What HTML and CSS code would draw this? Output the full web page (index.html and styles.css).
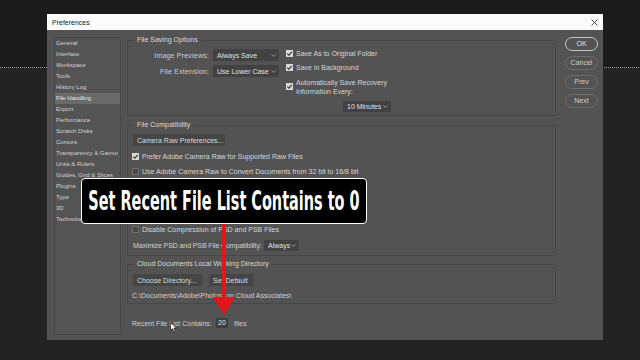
FILE: index.html
```html
<!DOCTYPE html>
<html>
<head>
<meta charset="utf-8">
<title>Preferences</title>
<link rel="stylesheet" href="styles.css">
</head>
<body>
<div class="desktop">
  <div class="dialog">
    <div class="titlebar">
      <span class="title">Preferences</span>
      <svg class="close" width="7" height="7" viewBox="0 0 7 7"><path d="M0.5 0.5 L6.5 6.5 M6.5 0.5 L0.5 6.5" stroke="#333" stroke-width="0.9" fill="none"/></svg>
    </div>
    <div class="dbody">
      <ul class="sidebar">
        <li>General</li>
        <li>Interface</li>
        <li>Workspace</li>
        <li>Tools</li>
        <li>History Log</li>
        <li class="sel-item">File Handling</li>
        <li>Export</li>
        <li>Performance</li>
        <li>Scratch Disks</li>
        <li>Cursors</li>
        <li>Transparency &amp; Gamut</li>
        <li>Units &amp; Rulers</li>
        <li>Guides, Grid &amp; Slices</li>
        <li>Plugins</li>
        <li>Type</li>
        <li>3D</li>
        <li>Technology Previews</li>
      </ul>

      <div class="main">
        <fieldset class="grp">
          <legend>File Saving Options</legend>
          <div class="g1">
            <div class="g1-left">
              <div class="frow"><span class="flabel">Image Previews:</span><span class="select w66">Always Save<svg class="chev" width="5" height="3" viewBox="0 0 5 3"><path d="M0.5 0.5 L2.5 2.5 L4.5 0.5" stroke="#aaa" stroke-width="0.8" fill="none"/></svg></span></div>
              <div class="frow"><span class="flabel">File Extension:</span><span class="select w66">Use Lower Case<svg class="chev" width="5" height="3" viewBox="0 0 5 3"><path d="M0.5 0.5 L2.5 2.5 L4.5 0.5" stroke="#aaa" stroke-width="0.8" fill="none"/></svg></span></div>
            </div>
            <div class="g1-right">
              <div class="crow"><span class="cb on"><svg width="7" height="7" viewBox="0 0 7 7"><path d="M1.3 3.6 L2.9 5.1 L5.8 1.8" stroke="#333" stroke-width="1.1" fill="none"/></svg></span>Save As to Original Folder</div>
              <div class="crow"><span class="cb on"><svg width="7" height="7" viewBox="0 0 7 7"><path d="M1.3 3.6 L2.9 5.1 L5.8 1.8" stroke="#333" stroke-width="1.1" fill="none"/></svg></span>Save in Background</div>
              <div class="crow two"><span class="cb on"><svg width="7" height="7" viewBox="0 0 7 7"><path d="M1.3 3.6 L2.9 5.1 L5.8 1.8" stroke="#333" stroke-width="1.1" fill="none"/></svg></span><span>Automatically Save Recovery<br>Information Every:</span></div>
              <span class="select w48 mins">10 Minutes<svg class="chev" width="5" height="3" viewBox="0 0 5 3"><path d="M0.5 0.5 L2.5 2.5 L4.5 0.5" stroke="#aaa" stroke-width="0.8" fill="none"/></svg></span>
            </div>
          </div>
        </fieldset>

        <fieldset class="grp g2box">
          <legend>File Compatibility</legend>
          <div class="g2">
            <span class="btn crp">Camera Raw Preferences...</span>
            <div class="rows">
              <div class="crow r"><span class="cb on"><svg width="7" height="7" viewBox="0 0 7 7"><path d="M1.3 3.6 L2.9 5.1 L5.8 1.8" stroke="#333" stroke-width="1.1" fill="none"/></svg></span>Prefer Adobe Camera Raw for Supported Raw Files</div>
              <div class="crow r"><span class="cb"></span>Use Adobe Camera Raw to Convert Documents from 32 bit to 16/8 bit</div>
              <div class="crow r"><span class="cb"></span></div>
              <div class="crow r"><span class="cb"></span></div>
              <div class="crow r"><span class="cb"></span></div>
              <div class="crow r"><span class="cb"></span>Disable Compression of PSD and PSB Files</div>
            </div>
            <div class="maxrow"><span class="mlabel">Maximize PSD and PSB File Compatibility:</span><span class="select w35">Always<svg class="chev" width="5" height="3" viewBox="0 0 5 3"><path d="M0.5 0.5 L2.5 2.5 L4.5 0.5" stroke="#aaa" stroke-width="0.8" fill="none"/></svg></span></div>
          </div>
        </fieldset>

        <fieldset class="grp g3box">
          <legend>Cloud Documents Local Working Directory</legend>
          <div class="g3">
            <div class="brow"><span class="btn cd">Choose Directory...</span><span class="btn sd">Set Default</span></div>
            <div class="path">C:\Documents\Adobe\Photoshop Cloud Associates\</div>
          </div>
        </fieldset>

        <div class="recent"><span class="rlabel">Recent File List Contains:</span><span class="num">20</span><span class="files">files</span></div>
      </div>

      <div class="btns">
        <span class="pbtn ok">OK</span>
        <span class="pbtn">Cancel</span>
        <span class="pbtn">Prev</span>
        <span class="pbtn">Next</span>
      </div>
    </div>
  </div>

  <div class="callout"><span class="ctext">Set Recent File List Contains to 0</span></div>
  <svg class="arrow" width="28" height="96" viewBox="0 0 28 96">
    <rect x="12" y="2" width="4" height="76" fill="#e3161b"/>
    <polygon points="3,75 25,75 14,93" fill="#e3161b"/>
  </svg>
  <svg class="cursor" width="8" height="11" viewBox="0 0 8 11">
    <path d="M0.5 0.5 L0.5 8.5 L2.5 6.6 L4 9.8 L5.4 9.2 L3.9 6.1 L6.5 6.1 Z" fill="#fff" stroke="#000" stroke-width="0.6"/>
  </svg>
</div>
</body>
</html>
```

FILE: styles.css
```css
* { box-sizing: border-box; }
html, body { margin: 0; padding: 0; }
body {
  width: 640px;
  height: 360px;
  overflow: hidden;
  font-family: "Liberation Sans", Arial, sans-serif;
  background: #232323;
}
.desktop {
  position: relative;
  width: 640px;
  height: 360px;
  padding: 14px 0 0 47px;
  background:
    repeating-linear-gradient(90deg, #9a9a9a 0 1px, transparent 1px 2px) 0 67px / 100% 1px no-repeat,
    linear-gradient(#1b1b1b, #1b1b1b) 0 0 / 100% 67px no-repeat,
    #232323;
}
.dialog {
  width: 556px;
  height: 326px;
  display: flex;
  flex-direction: column;
  background: #535353;
}
.titlebar {
  height: 16px;
  flex: none;
  background: #fbfbfb;
  display: flex;
  align-items: center;
  justify-content: space-between;
  padding: 0 5px 0 5px;
}
.title {
  font-size: 7px;
  color: #222;
}
.close { display: block; }
.dbody {
  flex: 1;
  display: flex;
  padding: 5px 5px 5px 7px;
}
.sidebar {
  list-style: none;
  margin: 2px 6px 0 0;
  padding: 0;
  width: 67px;
  flex: none;
  border: 1px solid #494949;
  background: #545454;
}
.sidebar li {
  height: 11px;
  line-height: 11px;
  font-size: 6px;
  color: #d2d2d2;
  padding-left: 1px;
  white-space: nowrap;
  overflow: hidden;
}
.sidebar li.sel-item { background: #6a6a6a; color: #e6e6e6; }

.main {
  width: 429px;
  flex: none;
  display: flex;
  flex-direction: column;
  font-size: 7px;
  color: #d6d6d6;
}
.grp {
  margin: 0;
  padding: 0;
  border: 1px solid #474747;
  min-inline-size: 0;
}
.grp legend {
  margin-left: 6px;
  padding: 0 3px;
  font-size: 7px;
  line-height: 10px;
  color: #d8d8d8;
}
.g1 {
  display: flex;
  padding: 1px 0 3px 0;
}
.g1-left {
  width: 158px;
  flex: none;
  padding-top: 1px;
}
.frow {
  height: 16px;
  display: flex;
  align-items: center;
}
.flabel {
  width: 81px;
  margin-right: 4px;
  text-align: right;
  letter-spacing: 0.2px;
  color: #cfcfcf;
}
.select {
  height: 12px;
  display: flex;
  align-items: center;
  justify-content: space-between;
  padding: 0 3px 0 4px;
  background: #424242;
  color: #e0e0e0;
  white-space: nowrap;
}
.select .chev { display: block; flex: none; }
.w66 { width: 66px; }
.w48 { width: 48px; }
.w35 { width: 35px; height: 11px; flex: none; }
.g1-right {
  display: flex;
  flex-direction: column;
  align-items: flex-start;
}
.crow {
  height: 14px;
  display: flex;
  align-items: center;
  white-space: nowrap;
}
.crow.two {
  height: 18px;
  line-height: 9px;
  margin-top: 3.5px;
}
.cb {
  width: 7px;
  height: 7px;
  flex: none;
  margin-right: 3px;
  background: #484848;
  border: 1px solid #707070;
  display: block;
}
.cb svg { display: block; margin: -1px; }
.cb.on { background: #d9d9d9; border-color: #d9d9d9; }
.mins {
  margin-top: 5.5px;
  margin-left: 57px;
  height: 11px;
}

.g2box { margin-top: 4px; }
.g2 {
  display: flex;
  flex-direction: column;
  align-items: flex-start;
  padding: 0 0 3px 4px;
}
.btn {
  height: 12px;
  display: flex;
  align-items: center;
  padding-left: 4px;
  background: #454545;
  color: #dadada;
  white-space: nowrap;
}
.crp { margin: 4px 0 0 1px; width: 92px; }
.rows { margin-top: 3px; }
.crow.r { height: 14.7px; }
.maxrow {
  margin-top: 1px;
  height: 14px;
  display: flex;
  align-items: center;
}
.mlabel {
  width: 132px;
  flex: none;
  padding-left: 1px;
  color: #cfcfcf;
  white-space: nowrap;
  letter-spacing: -0.1px;
}

.g3box { margin-top: 3px; }
.g3 { padding: 0 0 1px 4px; }
.brow { display: flex; margin-top: 5px; }
.cd { width: 69px; margin-left: 1px; }
.sd { width: 45px; margin-left: 7px; }
.path {
  margin-top: 4px;
  line-height: 12px;
  height: 12px;
  color: #cfcfcf;
  white-space: nowrap;
}

.recent {
  margin-top: 13px;
  height: 12px;
  display: flex;
  align-items: center;
  padding-left: 5px;
  color: #cfcfcf;
}
.rlabel { width: 84px; }
.num {
  width: 12px;
  height: 10px;
  line-height: 10px;
  text-align: center;
  background: #3e3e3e;
  color: #e6e6e6;
}
.files { margin-left: 6px; }

.btns {
  margin: 2px 0 0 9px;
  width: 33px;
  flex: none;
  display: flex;
  flex-direction: column;
  gap: 5px;
}
.pbtn {
  height: 14px;
  border: 1px solid #6c6c6c;
  border-radius: 7px;
  font-size: 7px;
  line-height: 12px;
  text-align: center;
  color: #cfcfcf;
}
.pbtn.ok { border-color: #c4c4c4; color: #e2e2e2; }

.callout {
  position: absolute;
  left: 81px;
  top: 178px;
  width: 286px;
  height: 46px;
  background: #000;
  border: 1.5px solid #fff;
  border-radius: 4px;
  display: flex;
  align-items: center;
  justify-content: center;
}
.ctext {
  display: inline-block;
  flex: none;
  white-space: nowrap;
  font-family: "DejaVu Sans Condensed", "DejaVu Sans", sans-serif;
  font-stretch: condensed;
  font-weight: bold;
  font-size: 27px;
  line-height: 30px;
  color: #fff;
  transform: scaleX(0.595);
}
.arrow { position: absolute; left: 210px; top: 222px; }
.cursor { position: absolute; left: 170px; top: 322px; }
```
